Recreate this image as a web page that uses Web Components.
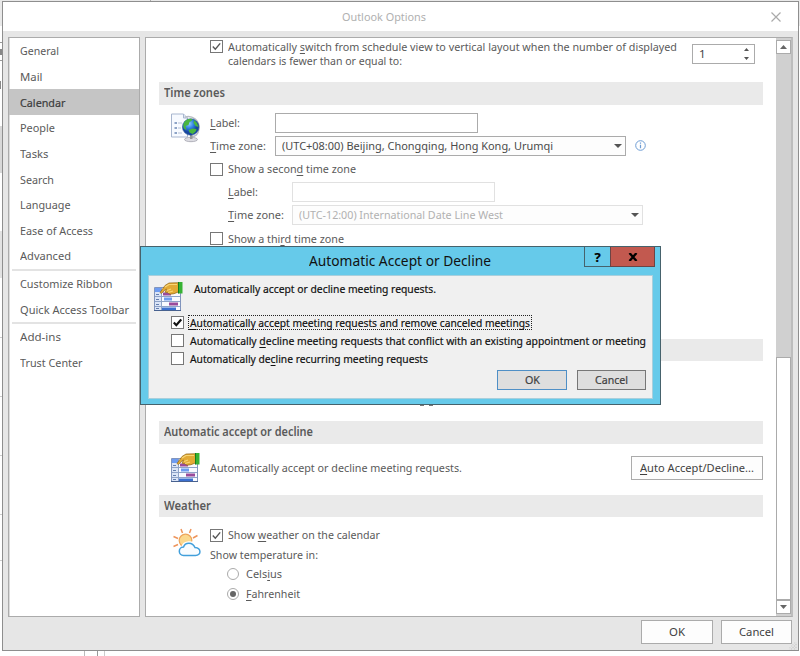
<!DOCTYPE html>
<html lang="en">
<head>
<meta charset="utf-8">
<title>Outlook Options</title>
<style>
  * {
    box-sizing: border-box;
  }

  body {
    margin: 0;
    width: 800px;
    height: 656px;
    overflow: hidden;
    position: relative;
    padding: 1px 0 0 2px;
    font: 11.6px/14px "Noto Sans", "Open Sans", sans-serif;
    color: #5a5a5a;
    /* the application window that shows around the options window */
    background:
      linear-gradient(#aaa, #aaa) 150px 0 / 1px 1px no-repeat,
      linear-gradient(#bbb, #bbb) 84px 651px / 1px 5px no-repeat,
      linear-gradient(#999, #999) 97px 651px / 1px 5px no-repeat,
      linear-gradient(#ccc, #ccc) 104px 651px / 1px 5px no-repeat,
      linear-gradient(#999, #999) 0 42px / 2px 1px no-repeat,
      linear-gradient(#888, #888) 0 49px / 2px 6px no-repeat,
      linear-gradient(#999, #999) 0 60px / 2px 1px no-repeat,
      linear-gradient(#888, #888) 0 81px / 1px 8px no-repeat,
      linear-gradient(#d8d8d8, #d8d8d8) 0 126px / 2px 47px no-repeat,
      linear-gradient(#e2e2e2, #e2e2e2) 0 231px / 2px 47px no-repeat,
      linear-gradient(#ccc, #ccc) 0 337px / 2px 1px no-repeat,
      linear-gradient(#ccc, #ccc) 0 396px / 2px 1px no-repeat,
      linear-gradient(#ccc, #ccc) 0 455px / 2px 1px no-repeat,
      linear-gradient(#ccc, #ccc) 0 514px / 2px 1px no-repeat,
      linear-gradient(#ccc, #ccc) 0 560px / 2px 1px no-repeat,
      linear-gradient(#e9e9e9, #e9e9e9) 0 0 / 800px 26px no-repeat,
      #fff;
  }

  u {
    text-decoration-thickness: 1px;
    text-underline-offset: 2px;
    text-decoration-skip-ink: none;
  }

  .row {
    display: flex;
    align-items: center;
  }

  .section {
    display: flex;
    align-items: flex-start;
    padding-left: 11px;
  }

  .fields {
    flex: 1;
  }

  .indent {
    padding-left: 18px;
  }

  .line {
    height: 2px;
    margin: 0 3px;
    background: #e3e3e3;
  }

  .descenders {
    display: flex;
    gap: 5px;
    padding: 43px 0 0 261px;
    height: 60px;
  }

  .descenders i {
    width: 4px;
    height: 2px;
    background: #777;
  }
</style>
</head>
<body>

<options-window>
  <fit-text slot="title" w="84">Outlook Options</fit-text>

  <nav-item slot="nav"><fit-text w="39">General</fit-text></nav-item>
  <nav-item slot="nav"><fit-text w="22.5">Mail</fit-text></nav-item>
  <nav-item slot="nav" selected><fit-text w="45.5">Calendar</fit-text></nav-item>
  <nav-item slot="nav"><fit-text w="35">People</fit-text></nav-item>
  <nav-item slot="nav"><fit-text w="28.5">Tasks</fit-text></nav-item>
  <nav-item slot="nav"><fit-text w="34">Search</fit-text></nav-item>
  <nav-item slot="nav"><fit-text w="50.5">Language</fit-text></nav-item>
  <nav-item slot="nav"><fit-text w="73">Ease of Access</fit-text></nav-item>
  <nav-item slot="nav"><fit-text w="51">Advanced</fit-text></nav-item>
  <div slot="nav" class="line"></div>
  <nav-item slot="nav"><fit-text w="92.5">Customize Ribbon</fit-text></nav-item>
  <nav-item slot="nav"><fit-text w="109">Quick Access Toolbar</fit-text></nav-item>
  <div slot="nav" class="line"></div>
  <nav-item slot="nav"><fit-text w="41">Add-ins</fit-text></nav-item>
  <nav-item slot="nav"><fit-text w="62.5">Trust Center</fit-text></nav-item>

  <div class="row" style="height: 44px; padding: 1px 8px 0 51px; align-items: flex-start">
    <check-box checked style="margin-top: 1px"></check-box>
    <div style="width: 464px; padding: .5px 0 0 5px">
      <fit-text w="449">Automatically <u>s</u>witch from schedule view to vertical layout when the number of displayed</fit-text><br>
      <fit-text w="174">calendars is fewer than or equal to:</fit-text>
    </div>
    <spin-field style="margin: 5px 0 0 5px">1</spin-field>
  </div>

  <section-header><fit-text w="61">Time zones</fit-text></section-header>
  <div class="section" style="height: 234px; padding-top: 7px">
    <app-icon name="globe" style="margin-right: 8px"></app-icon>
    <div class="fields">
      <div class="row" style="height: 22px"><fit-text w="30" style="--box: 65px"><u>L</u>abel:</fit-text><text-field></text-field></div>
      <div class="row" style="height: 24px">
        <fit-text w="56" style="--box: 65px"><u>T</u>ime zone:</fit-text>
        <select-field><fit-text w="271">(UTC+08:00) Beijing, Chongqing, Hong Kong, Urumqi</fit-text></select-field>
        <app-icon name="info" style="margin-left: 9px"></app-icon>
      </div>
      <div class="row" style="height: 23px"><check-box></check-box><fit-text w="128" style="margin-left: 5px">Show a secon<u>d</u> time zone</fit-text></div>
      <div class="row indent" style="height: 22px"><fit-text w="30" style="--box: 64px"><u>L</u>abel:</fit-text><text-field disabled></text-field></div>
      <div class="row indent" style="height: 24px">
        <fit-text w="56" style="--box: 64px"><u>T</u>ime zone:</fit-text>
        <select-field disabled><fit-text w="204">(UTC-12:00) International Date Line West</fit-text></select-field>
      </div>
      <div class="row" style="height: 24px"><check-box></check-box><fit-text w="116" style="margin-left: 5px">Show a thi<u>r</u>d time zone</fit-text></div>
    </div>
  </div>

  <section-header></section-header>
  <div class="descenders"><i></i><i></i></div>

  <section-header><fit-text w="149">Automatic accept or decline</fit-text></section-header>
  <div class="row" style="height: 51px; padding: 0 0 3px 11px">
    <app-icon name="accept" style="margin-right: 8px"></app-icon>
    <fit-text w="252">Automatically accept or decline meeting requests.</fit-text>
    <push-button style="--w: 132px; --h: 24px; margin-left: auto"><fit-text w="114"><u>A</u>uto Accept/Decline...</fit-text></push-button>
  </div>

  <section-header><fit-text w="47">Weather</fit-text></section-header>
  <div class="section" style="padding-top: 8px">
    <app-icon name="weather" style="margin: 3px 8px 0 0"></app-icon>
    <div class="fields">
      <div class="row" style="height: 20px"><check-box checked></check-box><fit-text w="152" style="margin-left: 5px">Show <u>w</u>eather on the calendar</fit-text></div>
      <div class="row" style="height: 20px"><fit-text w="108">Show temperature in:</fit-text></div>
      <div class="row" style="height: 17px; padding-left: 17px"><radio-button></radio-button><fit-text w="36" style="margin-left: 7px">Cels<u>i</u>us</fit-text></div>
      <div class="row" style="height: 24px; padding-left: 17px"><radio-button checked></radio-button><fit-text w="54" style="margin-left: 7px"><u>F</u>ahrenheit</fit-text></div>
    </div>
  </div>

  <push-button slot="footer" style="--w: 72px; --h: 24px"><fit-text w="16">OK</fit-text></push-button>
  <push-button slot="footer" style="--w: 71px; --h: 24px"><fit-text w="35">Cancel</fit-text></push-button>
</options-window>

<message-dialog>
  <fit-text slot="title" w="182">Automatic Accept or Decline</fit-text>
  <div class="row" style="height: 37px">
    <app-icon name="accept" style="margin: 4px 9px 0 4px"></app-icon>
    <fit-text w="242" style="margin-top: -11px">Automatically accept or decline meeting requests.</fit-text>
  </div>
  <dialog-option checked focused><fit-text w="340"><u>A</u>utomatically accept meeting requests and remove canceled meetings</fit-text></dialog-option>
  <dialog-option><fit-text w="456">Automatically <u>d</u>ecline meeting requests that conflict with an existing appointment or meeting</fit-text></dialog-option>
  <dialog-option><fit-text w="238">Automatically de<u>c</u>line recurring meeting requests</fit-text></dialog-option>
  <push-button slot="footer" style="--w: 70px; --h: 20px; --face: #dedede; --edge: #4f8fc6"><fit-text w="15">OK</fit-text></push-button>
  <push-button slot="footer" style="--w: 69px; --h: 20px; --face: #dedede; --edge: #777"><fit-text w="33">Cancel</fit-text></push-button>
</message-dialog>

<script>
/**
 * Registers a custom element that clones the markup into an open shadow root.
 *
 * @param {string} name - The tag name.
 * @param {string} markup - The styles and the markup of the element.
 */
const define = (name, markup) => {
  const template = document.createElement('template')
  template.innerHTML = markup

  customElements.define(name, class extends HTMLElement {
    constructor () {
      super()
      this.attachShadow({ mode: 'open' })
        .appendChild(template.content.cloneNode(true))
    }
  })
}

/* ------------WINDOWS----------- */

define('scroll-bar', `
  <style>
    :host {
      display: flex;
      flex-direction: column;
      box-sizing: border-box;
      width: 15px;
      padding: 2px 0;
      background: #d0d0d0;
    }
    div {
      box-sizing: border-box;
      border: 1px solid #ababab;
      background: #fff;
    }
    .button {
      display: flex;
      align-items: center;
      justify-content: center;
      height: 14px;
    }
    .thumb {
      margin-top: auto;
      height: 243px;
    }
  </style>
  <div class="button"><svg width="7" height="4"><path d="M0 4 3.5 0 7 4z" fill="#666"/></svg></div>
  <div class="thumb"></div>
  <div class="button"><svg width="7" height="4"><path d="M0 0 3.5 4 7 0z" fill="#666"/></svg></div>
`)

define('options-window', `
  <style>
    :host {
      display: flex;
      flex-direction: column;
      box-sizing: border-box;
      width: 797px;
      height: 650px;
      border: 1px solid #8e8e8e;
      background: #e6e6e6;
    }
    * {
      box-sizing: border-box;
    }
    header {
      display: grid;
      grid-template-columns: 1fr auto 1fr;
      align-items: center;
      height: 29px;
      padding: 0 17px 0 0;
      background: #fff;
      color: #b0b0b0;
    }
    header svg {
      grid-column: 3;
      justify-self: end;
    }
    header slot {
      display: block;
      grid-column: 2;
      padding-right: 17px;
    }
    main {
      display: flex;
      gap: 5px;
      height: 580px;
      margin: 6px 5px 0;
    }
    nav, section {
      border: 1px solid #ababab;
      background: #fff;
    }
    nav {
      width: 132px;
      box-shadow: inset 1px 0 #dcdcdc;
    }
    section {
      display: flex;
      flex: 1;
      border-right: 2px solid #bdbdbd;
    }
    .page {
      width: 617px;
      padding-left: 13px;
    }
    scroll-bar {
      margin-left: 13px;
    }
    footer {
      display: flex;
      justify-content: flex-end;
      gap: 8px;
      padding: 3px 6px 0;
      position: relative;
    }
    .grip {
      position: absolute;
      right: 1px;
      bottom: -6px;
    }
  </style>
  <header>
    <slot name="title"></slot>
    <svg width="10" height="10"><path d="M.5.5l9 9M9.5.5l-9 9" stroke="#aaa" stroke-width="1.2"/></svg>
  </header>
  <main>
    <nav><slot name="nav"></slot></nav>
    <section>
      <div class="page"><slot></slot></div>
      <scroll-bar></scroll-bar>
    </section>
  </main>
  <footer>
    <slot name="footer"></slot>
    <svg class="grip" width="8" height="8" fill="#fff" stroke="#bbb" stroke-width=".5"><path d="M6 0h2v2H6zM3 3h2v2H3zM6 3h2v2H6zM0 6h2v2H0zM3 6h2v2H3zM6 6h2v2H6z"/></svg>
  </footer>
`)

define('message-dialog', `
  <style>
    :host {
      position: absolute;
      left: 140px;
      top: 246px;
      display: block;
      box-sizing: border-box;
      width: 521px;
      height: 159px;
      padding: 0 7px 0 7px;
      border: 1px solid #46626c;
      background: #66caea;
      color: #111;
      font-size: 11.4px;
      -webkit-text-stroke: .2px;
    }
    * {
      box-sizing: border-box;
    }
    header {
      display: flex;
      height: 28px;
      margin-right: -2px;
    }
    .title {
      width: 436px;
      padding: 5px 0 0 161px;
      font-size: 14.6px;
      line-height: 17px;
      -webkit-text-stroke: 0;
    }
    .button {
      display: flex;
      align-items: center;
      justify-content: center;
      height: 20px;
      width: 27px;
      border: 1px solid #46626c;
      border-top: 0;
      font: bold 13px "Noto Sans", sans-serif;
      color: #000;
    }
    .close {
      width: 45px;
      margin-left: -1px;
      background: #c2594f;
      border-color: #6d4444;
    }
    main {
      height: 124px;
      border: 1px solid #a9cfdc;
      background: #f0f0f0;
    }
    footer {
      display: flex;
      justify-content: flex-end;
      gap: 10px;
      padding: 3px 6px 0 0;
    }
  </style>
  <header>
    <div class="title"><slot name="title"></slot></div>
    <div class="button">?</div>
    <div class="button close"><svg width="10" height="8"><path d="M1.500 0l7 8M8.500 0l-7 8" stroke="#000" stroke-width="2.300"/></svg></div>
  </header>
  <main>
    <slot></slot>
    <footer><slot name="footer"></slot></footer>
  </main>
`)

/* ------------PARTS----------- */

define('nav-item', `
  <style>
    :host {
      display: flex;
      align-items: center;
      box-sizing: border-box;
      height: 25.65px;
      padding: 1px 0 0 11px;
    }
    :host([selected]) {
      background: #c5c5c5;
      color: #3c3c3c;
      -webkit-text-stroke: .2px;
    }
  </style>
  <slot></slot>
`)

define('section-header', `
  <style>
    :host {
      display: flex;
      align-items: center;
      box-sizing: border-box;
      height: 22.6px;
      padding: 0 0 1px 5px;
      background: #eaeaea;
      font-weight: 600;
    }
  </style>
  <slot></slot>
`)

define('check-box', `
  <style>
    :host {
      display: flex;
      align-items: center;
      justify-content: center;
      flex: none;
      box-sizing: border-box;
      width: 13px;
      height: 13px;
      border: 1px solid #777;
      background: #fff;
    }
    svg {
      display: none;
    }
    :host([checked]) svg {
      display: block;
    }
  </style>
  <svg width="9" height="9" fill="none" stroke="var(--tick, #555)" stroke-width="var(--tick-width, 1.4)"><path d="M.8 4.6 3.3 7.2 8.2 1.4"/></svg>
`)

define('radio-button', `
  <style>
    :host {
      display: flex;
      align-items: center;
      justify-content: center;
      box-sizing: border-box;
      width: 12px;
      height: 12px;
      border: 1px solid #aaa;
      border-radius: 50%;
      background: #fff;
    }
    :host([checked])::after {
      content: "";
      width: 6px;
      height: 6px;
      border-radius: 50%;
      background: #666;
    }
  </style>
`)

define('text-field', `
  <style>
    :host {
      display: block;
      box-sizing: border-box;
      width: 203px;
      height: 20px;
      border: 1px solid #ababab;
    }
    :host([disabled]) {
      border-color: #e1e1e1;
    }
  </style>
`)

define('select-field', `
  <style>
    :host {
      display: flex;
      align-items: center;
      justify-content: space-between;
      box-sizing: border-box;
      width: 351px;
      height: 20px;
      padding: 0 3px 0 6px;
      border: 1px solid #ababab;
      background: #fdfdfd;
      color: #4a4a4a;
    }
    :host([disabled]) {
      border-color: #e1e1e1;
      color: #b1b1b1;
    }
  </style>
  <slot></slot>
  <svg width="8" height="4"><path d="M0 0h8L4 4z" fill="#555"/></svg>
`)

define('spin-field', `
  <style>
    :host {
      display: flex;
      align-items: center;
      justify-content: space-between;
      box-sizing: border-box;
      width: 63px;
      height: 20px;
      padding: 0 5px 0 6px;
      border: 1px solid #ababab;
      color: #444;
    }
  </style>
  <span><slot></slot></span>
  <svg width="5" height="12" fill="#555"><path d="M0 3 2.5 0 5 3zM0 9h5L2.5 12z"/></svg>
`)

define('push-button', `
  <style>
    :host {
      display: flex;
      align-items: center;
      justify-content: center;
      box-sizing: border-box;
      width: var(--w);
      height: var(--h);
      border: 1px solid var(--edge, #ababab);
      background: var(--face, #fdfdfd);
      color: #3f3f3f;
    }
  </style>
  <slot></slot>
`)

/* ------------ICONS----------- */

const icons = {
  globe: `<svg width="32" height="32" viewBox="0 0 32 32">
    <defs><radialGradient id="sea" cx=".4" cy=".3"><stop stop-color="#8fd0ff"/><stop offset=".6" stop-color="#2b7be0"/><stop offset="1" stop-color="#1746a0"/></radialGradient></defs>
    <path d="M1.500 2h12l4 4v19h-16z" fill="#f7faff" stroke="#a8b6cf"/><path d="M13.500 2v4h4" fill="#dbe4f3" stroke="#a8b6cf"/>
    <path d="M4.500 11h2.500M4.500 16h2.500M4.500 21h2.500" stroke="#6b86b4" stroke-width="1.600"/><path d="M8 11h4M8 16h3M8 21h4" stroke="#b4c0d6"/>
    <path d="M15 5c7-2 15 3 14 12-.5 5-4 8-8 8" fill="none" stroke="#b9bcc4" stroke-width="1.400"/>
    <ellipse cx="21" cy="27.500" rx="6.500" ry="2.200" fill="#dcdce2" stroke="#9a9aa5" stroke-width=".7"/><path d="M20 23h2.500v4H20z" fill="#999"/>
    <circle cx="20.700" cy="15" r="8.300" fill="url(#sea)" stroke="#24508f" stroke-width=".5"/>
    <path d="M13.500 12c1-4 5-6 9-5l-1 2-2 1-1 3-3 1 1 4c-3-1-3.500-3-3-6zM24 8l3 3 1.500 4-3-1-2-3zM18.500 18l4-1.500 4 .5c0 2-2 4-4 5l-3-1.500z" fill="#49b640"/>
  </svg>`,
  accept: `<svg width="32" height="32" viewBox="0 0 32 32">
    <path d="M1.500 6.500h26v23h-26z" fill="#f8faff" stroke="#8195bd"/>
    <path d="M2 7h7v4H2z" fill="#6e9cf1"/><path d="M2 11h6v18H2z" fill="#dbe5f7"/>
    <path d="M8.500 7v22M2 15.500h25M2 20.500h25M2 25.500h25" stroke="#8ea3c8" fill="none"/>
    <path d="M3 13.500h3M3 18.500h3M3 23.500h3M3 27.500h3" stroke="#627dae"/>
    <path d="M10 11.500h8v3h-8zM16 21.500h9v3h-9z" fill="#994b9b"/><path d="M11 16.500h8v3h-8z" fill="#6e9cf1"/><path d="M9 26.500h14v2.500H9z" fill="#3b70d0"/>
    <path d="M1 29.500h27" stroke="#47618f"/>
    <path d="M7 11.500 12 4.500 16 2l10-.3v9l-5 2-4 .5-2-1.500-3-.5 1.500-3.200-2 1.400-3 3z" fill="#e2aa36" stroke="#8f6416" stroke-width=".7"/>
    <path d="M12 6l4-2.500h8M14 9.500l4-1.500M15 11.500l5-1.500" stroke="#f8d675" stroke-width="1.200" fill="none"/>
    <path d="M25.500 1h4v11.500h-4z" fill="#36b234"/><path d="M25.500 1v11.500" stroke="#147d1e"/>
  </svg>`,
  weather: `<svg width="32" height="32" viewBox="0 0 32 32" fill="none">
    <path d="M11 1l1.500 4M21 1l-1.500 4M3.500 8.500l4.500 2M27.500 7.500l-4.500 2.500M3.500 18.500l4.500-2" stroke="#ee955c" stroke-width="1.500"/>
    <circle cx="15.500" cy="12.500" r="6.300" fill="#fbd88e" stroke="#eda55c" stroke-width="1.200"/>
    <path d="M14 27.500a4.300 4.300 0 0 1-.5-8.500c1-4.500 9.500-5.500 11.500 0 6.500.8 6.500 8.500.5 8.500z" fill="#fff" stroke="#fff" stroke-width="4"/>
    <path d="M13.500 27.500a4.200 4.200 0 0 1 0-8.400c1.500-5 9-5.500 11.500.4 6.500.5 6.500 8 .5 8z" fill="#f8fcff" stroke="#419fdb" stroke-width="1.500"/>
  </svg>`,
  info: `<svg width="11" height="11" fill="none" stroke="#6e9dd4"><circle cx="5.500" cy="5.500" r="4.800"/><path d="M5.500 4.800v3.500M5.500 2.600v1.200" stroke-width="1.200"/></svg>`
}

/**
 * Represents an icon that is picked by its name.
 */
customElements.define('app-icon',
  class extends HTMLElement {
    constructor () {
      super()
      this.attachShadow({ mode: 'open' })
    }

    connectedCallback () {
      this.shadowRoot.innerHTML = `
        <style>
          :host { display: block; flex: none; }
          svg { display: block; }
        </style>
        ${icons[this.getAttribute('name')]}
      `
    }
  }
)

/* ------------DIALOG OPTION----------- */

define('dialog-option', `
  <style>
    :host {
      display: flex;
      align-items: center;
      gap: 4px;
      height: 18px;
      padding-left: 22px;
      --tick: #111;
      --tick-width: 2.2;
    }
    div {
      padding: 0 1px;
      border: 1px dotted transparent;
      line-height: 13px;
    }
    :host([focused]) div {
      border-color: #222;
    }
  </style>
  <check-box></check-box>
  <div><slot></slot></div>
`)

document.querySelectorAll('dialog-option[checked]').forEach(option => {
  option.shadowRoot.querySelector('check-box').setAttribute('checked', '')
})

/* ------------TEXT----------- */

/**
 * Represents a line of text that is condensed to the width in its w attribute.
 */
customElements.define('fit-text',
  class extends HTMLElement {
    constructor () {
      super()
      this.attachShadow({ mode: 'open' }).innerHTML = `
        <style>
          :host {
            display: inline-block;
            flex: none;
            width: var(--box, var(--text));
            white-space: nowrap;
            vertical-align: top;
          }
          span {
            display: inline-block;
            transform-origin: 0 0;
            vertical-align: top;
          }
        </style>
        <span><slot></slot></span>
      `
    }

    connectedCallback () {
      const span = this.shadowRoot.querySelector('span')
      const width = this.getAttribute('w')
      span.style.transform = `scaleX(${width / span.getBoundingClientRect().width})`
      this.style.setProperty('--text', `${width}px`)
    }
  }
)
</script>
</body>
</html>
